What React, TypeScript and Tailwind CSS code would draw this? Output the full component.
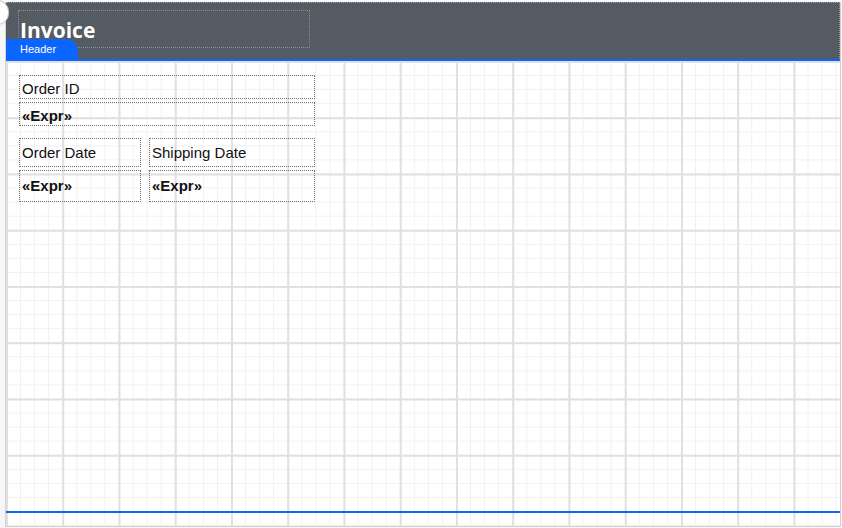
import React from 'react';

const grid =
  '[background-image:linear-gradient(to_right,#e0e0e0_2px,transparent_2px),linear-gradient(to_bottom,#e0e0e0_2px,transparent_2px),linear-gradient(to_right,#f1f1f1_1px,transparent_1px),linear-gradient(to_bottom,#f1f1f1_1px,transparent_1px)] [background-size:56.25px_56.25px,56.25px_56.25px,14.0625px_14.0625px,14.0625px_14.0625px]';

const Field = ({
  label,
  bold,
  className,
}: {
  label: string;
  bold?: boolean;
  className: string;
}) => (
  <div
    className={`border border-dotted border-[#6f6f6f] pl-[2px] text-[15px] leading-[17px] text-[#111] ${
      bold ? 'font-bold' : ''
    } ${className}`}
  >
    {label}
  </div>
);

export default function App() {
  return (
    <div
      className="relative w-[842px] h-[528px] overflow-hidden bg-[#f7f7f7]"
      style={{ fontFamily: '"Liberation Sans", Arial, sans-serif' }}
    >
      {/* corner handle */}
      <div className="absolute -left-[14px] top-0 z-20 w-[23px] h-[25px] rounded-full bg-white border border-[#c4c4c4]" />

      <div className="ml-[5px] mt-[2px] w-[836px] h-[525px] border border-t-0 border-[#d2d2d2] bg-white flex flex-col">
        {/* Header band */}
        <div className="relative h-[57px] shrink-0 bg-[#555b62] border-t border-r border-dotted border-[#9a9ea4]">
          <div className="ml-[12px] mt-[7px] w-[292px] h-[38px] border border-dotted border-[#8d9197] pl-[1px] pt-[5px]">
            <span
              className="text-white text-[21px] font-bold leading-[29px]"
              style={{ fontFamily: '"Open Sans", sans-serif' }}
            >
              Invoice
            </span>
          </div>
          <div className="absolute left-0 bottom-0 w-[72px] h-[20px] bg-[#0b66ff] rounded-tr-[12px] pl-[14px] text-white text-[11px] leading-[20px]">
            Header
          </div>
        </div>
        <div className="h-[2px] shrink-0 bg-[#0b66ff]" />

        {/* Body */}
        <div className={`flex-1 ${grid}`}>
          <div className="h-[452px] border-b-2 border-[#0b66ff] pt-[14px] pl-[13px]">
            <Field label="Order ID" className="w-[296px] h-[24px] pt-[4px]" />
            <Field label="«Expr»" bold className="mt-[3px] w-[296px] h-[24px] pt-[4px]" />
            <div className="mt-[12px] flex gap-[8px]">
              <Field label="Order Date" className="w-[122px] h-[29px] pt-[5px]" />
              <Field label="Shipping Date" className="w-[166px] h-[29px] pt-[5px]" />
            </div>
            <div className="mt-[3px] flex gap-[8px]">
              <Field label="«Expr»" bold className="w-[122px] h-[32px] pt-[6px]" />
              <Field label="«Expr»" bold className="w-[166px] h-[32px] pt-[6px]" />
            </div>
          </div>
        </div>
      </div>
    </div>
  );
}
